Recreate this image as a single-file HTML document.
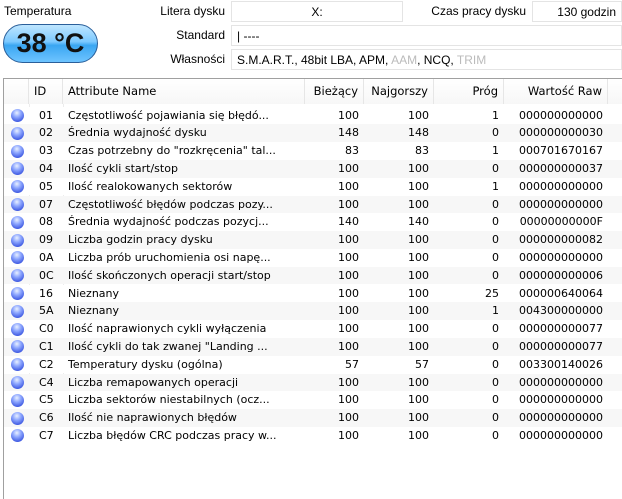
<!DOCTYPE html>
<html><head><meta charset="utf-8"><style>
body{margin:0;width:622px;height:480px;background:#fff;overflow:hidden;position:relative;font-family:"Liberation Sans",Tahoma,sans-serif;font-size:12px;color:#000}
.a{position:absolute;white-space:nowrap}
.box{position:absolute;border:1px solid #e4e4e4;height:21px;line-height:20px;box-sizing:border-box;padding:0 5px}
.lbl{position:absolute;text-align:right;line-height:20px}
#tbl{position:absolute;left:3px;top:78px;width:640px;height:420px;border-top:1px solid #a0a0a0;border-left:1px solid #a0a0a0}
.hd{position:absolute;top:0;height:25px;line-height:25px;border-right:1px solid #e6e6e6;box-sizing:border-box;padding:0 5px;font-family:"DejaVu Sans",Verdana,sans-serif;font-size:11.5px;background:linear-gradient(#fff,#f7f7f7)}
.row{position:absolute;left:0;width:620px;height:17.8px;line-height:17.8px;font-family:"DejaVu Sans",Verdana,sans-serif;font-size:11px}
.row span{position:absolute;top:0;white-space:nowrap}
.r{text-align:right}
.dot{position:absolute;left:7px;top:2.5px;width:13px;height:13px;border-radius:50%;background:radial-gradient(circle at 45% 30%,#e8f0ff 0,#8fa8ff 35%,#3a55e0 80%,#2a3cb0 100%)}
.sep{position:absolute;top:25px;height:340px;border-left:1px solid #ececec}
</style></head><body>
<div class="a" style="left:4px;top:4px">Temperatura</div>
<div class="a" style="left:3px;top:24px;width:95px;height:39px;border-radius:20px;border:1px solid #2a5f9a;box-sizing:border-box;background:linear-gradient(#bfe6ff 0%,#7cc9ff 45%,#3aa6f2 55%,#6ec4ff 100%);text-align:center;font-weight:bold;font-size:27px;line-height:37px;color:#111">38 °C</div>
<div class="lbl" style="left:120px;width:105px;top:1px">Litera dysku</div>
<div class="box" style="left:231px;top:1px;width:172px;text-align:center">X:</div>
<div class="lbl" style="left:410px;width:116px;top:1px">Czas pracy dysku</div>
<div class="box" style="left:532px;top:1px;width:90px;text-align:right">130 godzin</div>
<div class="lbl" style="left:120px;width:105px;top:25px">Standard</div>
<div class="box" style="left:231px;top:25px;width:391px">| ----</div>
<div class="lbl" style="left:120px;width:105px;top:49px">Własności</div>
<div class="box" style="left:231px;top:49px;width:391px">S.M.A.R.T., 48bit LBA, APM, <span style="color:#bbb">AAM</span>, NCQ, <span style="color:#bbb">TRIM</span></div>
<div id="tbl">
<div class="hd" style="left:0;width:25px"></div>
<div class="hd" style="left:25px;width:34px">ID</div>
<div class="hd" style="left:59px;width:242px">Attribute Name</div>
<div class="hd r" style="left:301px;width:59px">Bieżący</div>
<div class="hd r" style="left:360px;width:70px">Najgorszy</div>
<div class="hd r" style="left:430px;width:70px">Próg</div>
<div class="hd r" style="left:500px;width:104px">Wartość Raw</div>
<div class="hd" style="left:604px;width:40px"></div>
<div class="sep" style="left:25px"></div><div class="sep" style="left:59px"></div>
<div id="rows"></div>
</div>
<script>
var d=[["01","Częstotliwość pojawiania się błędó...",100,100,1,"000000000000"],["02","Średnia wydajność dysku",148,148,0,"000000000030"],["03","Czas potrzebny do \"rozkręcenia\" tal...",83,83,1,"000701670167"],["04","Ilość cykli start/stop",100,100,0,"000000000037"],["05","Ilość realokowanych sektorów",100,100,1,"000000000000"],["07","Częstotliwość błędów podczas pozy...",100,100,0,"000000000000"],["08","Średnia wydajność podczas pozycj...",140,140,0,"00000000000F"],["09","Liczba godzin pracy dysku",100,100,0,"000000000082"],["0A","Liczba prób uruchomienia osi napę...",100,100,0,"000000000000"],["0C","Ilość skończonych operacji start/stop",100,100,0,"000000000006"],["16","Nieznany",100,100,25,"000000640064"],["5A","Nieznany",100,100,1,"004300000000"],["C0","Ilość naprawionych cykli wyłączenia",100,100,0,"000000000077"],["C1","Ilość cykli do tak zwanej \"Landing ...",100,100,0,"000000000077"],["C2","Temperatury dysku (ogólna)",57,57,0,"003300140026"],["C4","Liczba remapowanych operacji",100,100,0,"000000000000"],["C5","Liczba sektorów niestabilnych (ocz...",100,100,0,"000000000000"],["C6","Ilość nie naprawionych błędów",100,100,0,"000000000000"],["C7","Liczba błędów CRC podczas pracy w...",100,100,0,"000000000000"]];
var h="";d.forEach(function(r,i){h+='<div class="row" style="top:'+(27.5+i*17.8)+'px;background:'+(i%2?'#f7f7f7':'#fff')+'"><div class="dot"></div><span style="left:35px">'+r[0]+'</span><span style="left:64px">'+r[1]+'</span><span class="r" style="left:300px;width:55px">'+r[2]+'</span><span class="r" style="left:360px;width:65px">'+r[3]+'</span><span class="r" style="left:430px;width:65px">'+r[4]+'</span><span class="r" style="left:500px;width:99px">'+r[5]+'</span></div>';});
document.getElementById("rows").innerHTML=h;
</script>
</body></html>
